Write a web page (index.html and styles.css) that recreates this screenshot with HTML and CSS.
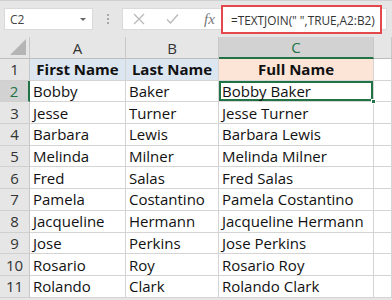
FILE: index.html
```html
<!DOCTYPE html>
<html>
<head>
<meta charset="utf-8">
<link rel="stylesheet" href="styles.css">
</head>
<body>
<div class="app">
  <div class="fbar">
    <div class="namebox"><span class="nb-text">C2</span><span class="nb-arrow"></span></div>
    <div class="dots"><i></i><i></i><i></i></div>
    <div class="inputarea">
      <svg class="ico" width="12" height="12" viewBox="0 0 12 12"><path d="M1 1L11 11M11 1L1 11" stroke="#b8b8b8" stroke-width="1.3" fill="none"/></svg>
      <svg class="ico check" width="13" height="12" viewBox="0 0 13 12"><path d="M1 6.5L4.5 10L12 1.5" stroke="#b8b8b8" stroke-width="1.3" fill="none"/></svg>
      <span class="fx">fx</span>
      <div class="formula">=TEXTJOIN(" ",TRUE,A2:B2)</div>
    </div>
  </div>
  <div class="grid">
    <div class="corner"><span class="tri"></span></div>
    <div class="colh">A</div>
    <div class="colh">B</div>
    <div class="colh sel">C</div>
    <div class="colh"></div>

    <div class="rowh">1</div>
    <div class="cell hd blue">First Name</div>
    <div class="cell hd blue">Last Name</div>
    <div class="cell hd peach">Full Name</div>
    <div class="cell"></div>

    <div class="rowh sel">2</div>
    <div class="cell">Bobby</div>
    <div class="cell">Baker</div>
    <div class="cell active">Bobby Baker<span class="handle"></span></div>
    <div class="cell"></div>

    <div class="rowh">3</div>
    <div class="cell">Jesse</div>
    <div class="cell">Turner</div>
    <div class="cell">Jesse Turner</div>
    <div class="cell"></div>

    <div class="rowh">4</div>
    <div class="cell">Barbara</div>
    <div class="cell">Lewis</div>
    <div class="cell">Barbara Lewis</div>
    <div class="cell"></div>

    <div class="rowh">5</div>
    <div class="cell">Melinda</div>
    <div class="cell">Milner</div>
    <div class="cell">Melinda Milner</div>
    <div class="cell"></div>

    <div class="rowh">6</div>
    <div class="cell">Fred</div>
    <div class="cell">Salas</div>
    <div class="cell">Fred Salas</div>
    <div class="cell"></div>

    <div class="rowh">7</div>
    <div class="cell">Pamela</div>
    <div class="cell">Costantino</div>
    <div class="cell">Pamela Costantino</div>
    <div class="cell"></div>

    <div class="rowh">8</div>
    <div class="cell">Jacqueline</div>
    <div class="cell">Hermann</div>
    <div class="cell">Jacqueline Hermann</div>
    <div class="cell"></div>

    <div class="rowh">9</div>
    <div class="cell">Jose</div>
    <div class="cell">Perkins</div>
    <div class="cell">Jose Perkins</div>
    <div class="cell"></div>

    <div class="rowh">10</div>
    <div class="cell">Rosario</div>
    <div class="cell">Roy</div>
    <div class="cell">Rosario Roy</div>
    <div class="cell"></div>

    <div class="rowh">11</div>
    <div class="cell">Rolando</div>
    <div class="cell">Clark</div>
    <div class="cell">Rolando Clark</div>
    <div class="cell"></div>
  </div>
</div>
</body>
</html>
```

FILE: styles.css
```css
* { box-sizing: border-box; }
html, body { margin: 0; padding: 0; }
body { width: 392px; height: 300px; overflow: hidden; background: #fff; font-family: "Open Sans", sans-serif; }
.app { width: 392px; height: 300px; overflow: hidden; background: #e6e6e6; }

.fbar {
  height: 37px;
  border-top: 1px solid #d0d0d0;
  display: flex;
  align-items: flex-start;
  padding: 7px 5px 0 4px;
  position: relative;
}
.namebox {
  width: 89px; height: 22px;
  background: #fff;
  border: 1px solid #dadada;
  display: flex; align-items: center; justify-content: space-between;
  padding: 0 6px 0 5px;
}
.nb-text { font-size: 12px; color: #444; }
.nb-arrow { width: 0; height: 0; border-left: 3px solid transparent; border-right: 3px solid transparent; border-top: 3px solid #666; }
.dots { width: 29px; height: 22px; display: flex; flex-direction: column; align-items: center; justify-content: center; gap: 2px; }
.dots i { display: block; width: 2px; height: 2px; background: #a8a8a8; }
.inputarea {
  flex: 1; height: 22px;
  background: #fff;
  border: 1px solid #dadada;
  display: flex; align-items: center;
  padding-left: 10px;
}
.ico { margin-right: 21px; }
.check { margin-right: 21px; }
.fx { font-family: "Liberation Serif", serif; font-style: italic; font-size: 15px; color: #777; margin-left: 4px; }
.formula {
  position: absolute;
  left: 221px; top: 4px;
  width: 161px; height: 29px;
  border: 2px solid #e5484b;
  background: #fff;
  font-size: 11.8px; color: #333;
  display: flex; align-items: center;
  padding-left: 8px;
  white-space: nowrap;
}

.grid {
  display: grid;
  grid-template-columns: 30px 96px 93px 155px 18px;
  grid-template-rows: 22px;
  grid-auto-rows: 21.7px;
}
.corner { background: #e6e6e6; border-right: 1px solid #c8c8c8; border-bottom: 1px solid #bdbdbd; position: relative; }
.tri { position: absolute; right: 3px; bottom: 3px; width: 0; height: 0; border-left: 16px solid transparent; border-bottom: 16px solid #b5b5b5; }
.colh {
  background: #e6e6e6;
  border-right: 1px solid #c8c8c8;
  border-bottom: 1px solid #bdbdbd;
  font-size: 15px; color: #333;
  display: flex; align-items: center; justify-content: center;
}
.colh.sel { background: #d2d2d2; color: #217346; border-bottom: 2px solid #217346; }
.rowh {
  background: #e6e6e6;
  border-right: 1px solid #c8c8c8;
  border-bottom: 1px solid #d0d0d0;
  font-size: 15px; color: #333;
  display: flex; align-items: center; justify-content: center;
}
.rowh.sel { background: #d2d2d2; color: #217346; border-right: 2px solid #217346; }
.cell {
  background: #fff;
  border-right: 1px solid #d4d4d4;
  border-bottom: 1px solid #d4d4d4;
  font-size: 15px; color: #111;
  display: flex; align-items: center;
  padding-left: 3px;
  white-space: nowrap;
  position: relative;
}
.cell.hd { font-weight: bold; justify-content: center; padding-left: 0; }
.blue { background: #dce6f1; }
.peach { background: #fce4d6; }
.active { box-shadow: inset 0 0 0 2px #217346; }
.handle { position: absolute; right: -3px; bottom: -3px; width: 5px; height: 5px; background: #217346; border: 1px solid #fff; z-index: 2; }
```
